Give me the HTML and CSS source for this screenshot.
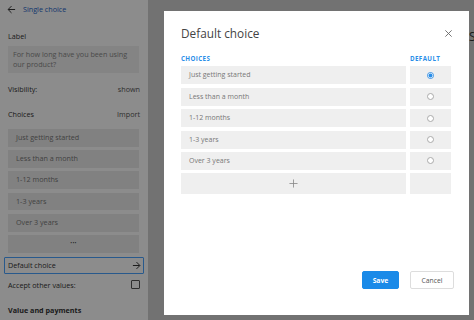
FILE: index.html
```html
<!DOCTYPE html>
<html lang="en">
<head>
    <meta charset="UTF-8">
    <meta name="viewport" content="width=device-width, initial-scale=1.0">
    <title>Default choice</title>
    <link rel="stylesheet" href="styles.css">
</head>
<body>
    <div class="page">
        <!-- Panneau de propriétés -->
        <aside class="sidebar">
            <div class="side-header">
                <svg class="back-icon" viewBox="0 0 10 10" width="9" height="9">
                    <path d="M9 5H1.5M5 1.2L1.2 5L5 8.8" fill="none" stroke="#333" stroke-width="1.1"/>
                </svg>
                <span class="side-title">Single choice</span>
            </div>

            <div class="field-label">Label</div>
            <div class="text-box">For how long have you been using our product?</div>

            <div class="field-row">
                <span>Visibility:</span>
                <span class="muted">shown</span>
            </div>

            <div class="field-row choices-head">
                <span>Choices</span>
                <span class="muted">Import</span>
            </div>

            <div class="side-choices">
                <div class="side-choice">Just getting started</div>
                <div class="side-choice">Less than a month</div>
                <div class="side-choice">1-12 months</div>
                <div class="side-choice">1-3 years</div>
                <div class="side-choice">Over 3 years</div>
                <div class="side-choice more">•••</div>
            </div>

            <div class="default-row">
                <span>Default choice</span>
                <svg viewBox="0 0 10 10" width="9" height="9">
                    <path d="M1 5H8.5M5 1.2L8.8 5L5 8.8" fill="none" stroke="#333" stroke-width="1.1"/>
                </svg>
            </div>

            <div class="field-row accept-row">
                <span>Accept other values:</span>
                <span class="checkbox"></span>
            </div>

            <div class="section-title">Value and payments</div>
        </aside>

        <main class="workspace">
            <div class="workspace-title">Survey</div>
        </main>
    </div>

    <div class="overlay"></div>

    <!-- Fenêtre modale -->
    <div class="modal">
        <div class="modal-header">
            <h2 class="modal-title">Default choice</h2>
            <svg class="close-icon" viewBox="0 0 10 10" width="9" height="9">
                <path d="M1.5 1.5L8.5 8.5M8.5 1.5L1.5 8.5" fill="none" stroke="#666" stroke-width="1"/>
            </svg>
        </div>

        <div class="choice-grid">
            <div class="col-head">CHOICES</div>
            <div class="col-head">DEFAULT</div>

            <div class="cell">Just getting started</div>
            <div class="cell radio-cell"><span class="radio checked"></span></div>

            <div class="cell">Less than a month</div>
            <div class="cell radio-cell"><span class="radio"></span></div>

            <div class="cell">1-12 months</div>
            <div class="cell radio-cell"><span class="radio"></span></div>

            <div class="cell">1-3 years</div>
            <div class="cell radio-cell"><span class="radio"></span></div>

            <div class="cell">Over 3 years</div>
            <div class="cell radio-cell"><span class="radio"></span></div>

            <div class="cell add-cell">
                <svg viewBox="0 0 10 10" width="9" height="9">
                    <path d="M5 0.5V9.5M0.5 5H9.5" fill="none" stroke="#888" stroke-width="0.9"/>
                </svg>
            </div>
            <div class="cell add-cell"></div>
        </div>

        <div class="modal-footer">
            <button class="btn btn-primary">Save</button>
            <button class="btn">Cancel</button>
        </div>
    </div>
</body>
</html>
```

FILE: styles.css
```css
* {
    margin: 0;
    padding: 0;
    box-sizing: border-box;
}

body {
    font-family: 'Open Sans', 'Noto Sans', sans-serif;
    font-size: 7px;
    color: #333;
    background: #cfcfcf;
    overflow: hidden;
    height: 320px;
}

.page {
    display: flex;
    height: 320px;
}

/* Panneau latéral */
.sidebar {
    width: 149px;
    background: #fff;
    border-right: 1px solid #d0d0d0;
    padding: 0 8px;
    display: flex;
    flex-direction: column;
    font-size: 7.2px;
}

.side-header {
    display: flex;
    align-items: center;
    height: 18px;
    margin-left: -1px;
    gap: 7px;
}

.side-title {
    color: #1e64c8;
}

.field-label {
    margin-top: 13px;
    line-height: 10px;
}

.text-box {
    margin-top: 5px;
    background: #f0f0f0;
    color: #888;
    line-height: 10px;
    padding: 3px 5px;
    height: 27px;
    width: 131px;
}

.field-row {
    display: flex;
    justify-content: space-between;
    align-items: center;
    width: 132px;
    line-height: 10px;
    margin-top: 11px;
}

.muted {
    color: #555;
}

.choices-head {
    margin-top: 15px;
}

.side-choices {
    display: flex;
    flex-direction: column;
    gap: 3.4px;
    margin-top: 10px;
    width: 131px;
}

.side-choice {
    background: #ececec;
    color: #777;
    height: 17.8px;
    line-height: 17.8px;
    padding-left: 8px;
}

.side-choice.more {
    text-align: center;
    padding-left: 0;
    font-size: 5px;
    letter-spacing: 0.3px;
    color: #444;
}

.default-row {
    margin: 4px 0 0 -4px;
    width: 140px;
    height: 17px;
    border: 1.5px solid #4aa3ff;
    border-radius: 1px;
    display: flex;
    justify-content: space-between;
    align-items: center;
    padding: 0 2px 0 3px;
}

.accept-row {
    margin-top: 6px;
}

.checkbox {
    width: 9px;
    height: 9px;
    border: 1px solid #555;
    border-radius: 1px;
}

.section-title {
    margin-top: 15px;
    font-weight: bold;
}

.workspace {
    flex: 1;
    padding: 28px 0 0 320px;
}

.workspace-title {
    font-size: 12px;
    color: #333;
}

/* Voile gris */
.overlay {
    position: fixed;
    top: 0;
    left: 0;
    width: 100%;
    height: 100%;
    background: rgba(0, 0, 0, 0.45);
}

/* Modale */
.modal {
    position: fixed;
    top: 11px;
    left: 164px;
    width: 305px;
    height: 304px;
    background: #fff;
    padding: 14px 15px 26px 17px;
    display: flex;
    flex-direction: column;
}

.modal-header {
    display: flex;
    justify-content: space-between;
    align-items: center;
    height: 16px;
    padding-right: 1px;
}

.modal-title {
    font-size: 11.8px;
    font-weight: normal;
    color: #444;
}

.choice-grid {
    display: grid;
    grid-template-columns: 225px 41px;
    grid-template-rows: 8px repeat(5, 18px) 21px;
    column-gap: 4px;
    row-gap: 3.4px;
    margin-top: 14px;
}

.col-head {
    color: #2a8ee8;
    font-weight: bold;
    font-size: 6.2px;
    letter-spacing: 0.4px;
    line-height: 8px;
}

.cell {
    background: #efefef;
    color: #777;
    line-height: 18px;
    padding-left: 8px;
}

.radio-cell,
.add-cell {
    display: flex;
    align-items: center;
    justify-content: center;
    padding-left: 0;
}

.radio {
    width: 7px;
    height: 7px;
    border-radius: 50%;
    border: 0.8px solid #aaa;
    background: #fff;
}

.radio.checked {
    border-color: #3d95e6;
    background: radial-gradient(circle, #2a8ee8 0 1.8px, #fff 2.2px);
}

.modal-footer {
    margin-top: auto;
    display: flex;
    justify-content: flex-end;
    gap: 11px;
}

.btn {
    font-family: inherit;
    font-size: 6.8px;
    height: 18px;
    border: 1px solid #ddd;
    background: #fff;
    color: #555;
    border-radius: 2px;
    width: 44px;
}

.btn-primary {
    width: 37px;
    background: #1a8ae8;
    border-color: #1a8ae8;
    color: #fff;
    font-weight: bold;
}
```
